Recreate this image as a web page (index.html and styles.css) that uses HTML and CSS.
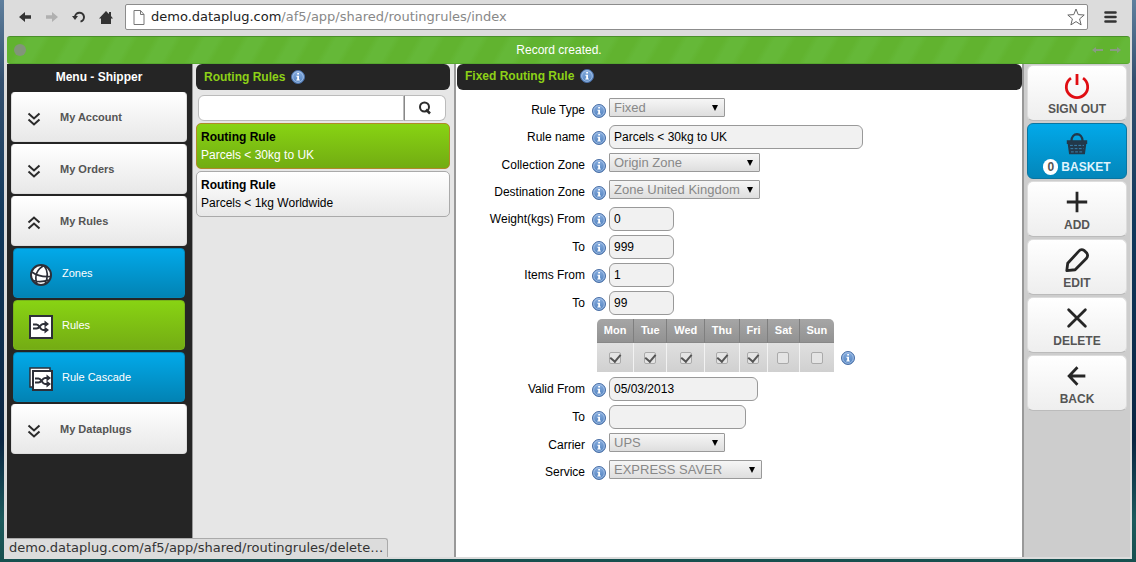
FILE: index.html
```
<!DOCTYPE html>
<html lang="en">
<head>
<meta charset="utf-8">
<title>Routing Rules</title>
<link rel="stylesheet" href="styles.css">
</head>
<body>
<svg class="sprite" aria-hidden="true">
  <defs>
    <linearGradient id="info-fill" x1="0" y1="0" x2="0" y2="1"><stop offset="0" stop-color="#88aee0"/><stop offset="1" stop-color="#4f80bd"/></linearGradient>
  </defs>
  <symbol id="info" viewBox="0 0 14 14"><circle cx="7" cy="7" r="6.5" fill="url(#info-fill)" stroke="#4a6fa5"/><circle cx="7" cy="7" r="5.3" fill="none" stroke="#a9c4e8" stroke-width=".8"/><path d="M6.2 3h1.8v1.6H6.200zM5.400 5.700h2.600v3.900h.8v1H5.300v-1h.9V6.700h-.8z" fill="#fff"/></symbol>
  <symbol id="down" viewBox="0 0 14 14"><path d="M1.500 1.500 7 6.500l5.500-5M1.500 7.500 7 12.500l5.500-5" fill="none" stroke="#2b2b2b" stroke-width="2"/></symbol>
  <symbol id="up" viewBox="0 0 14 14"><path d="M1.500 6.500 7 1.500l5.500 5M1.500 12.500 7 7.500l5.500 5" fill="none" stroke="#2b2b2b" stroke-width="2"/></symbol>
  <symbol id="arrow" viewBox="0 0 8 8"><path d="M1 1h6L4 7z" fill="#000"/></symbol>
  <symbol id="shuffle" viewBox="0 0 16 14"><path d="M0 4.500h3.500c3 0 3.500 5.500 6.500 5.500h2.500M0 8.500h3.500C7 8.500 7 4 10 4h2.500" fill="none" stroke="#2d2f38" stroke-width="2"/><path d="M11.500 .5 16 4l-4.500 3.500zM11.500 6.500 16 10l-4.500 3.500z" fill="#2d2f38"/></symbol>
</svg>
<div class="window">
  <header class="toolbar">
    <button class="tool" aria-label="Back"><svg width="14" height="12" viewBox="0 0 14 12"><path d="M1 6l6-5v3.200h6v3.600H7V11z" fill="#333"/></svg></button>
    <button class="tool" aria-label="Forward"><svg width="14" height="12" viewBox="0 0 14 12"><path d="M13 6L7 1v3.200H1v3.600h6V11z" fill="#b0b0b0"/></svg></button>
    <button class="tool" aria-label="Reload"><svg width="14" height="14" viewBox="0 0 14 14"><path d="M3 7.500A4.500 4.500 0 1 1 8.500 11.600" fill="none" stroke="#333" stroke-width="2"/><path d="M0 6h6L3 10z" fill="#333"/></svg></button>
    <button class="tool" aria-label="Home"><svg width="14" height="13" viewBox="0 0 14 13"><path d="M7 0l3 3V1h2v4l2 2.500h-2V13H2V7.500H0z" fill="#333"/></svg></button>
    <div class="address">
      <svg width="12" height="15" viewBox="0 0 12 15"><path d="M1 .5h6.500l3.500 4v10H1zM7.500.5v4H11" fill="#fff" stroke="#777"/></svg>
      <div class="url">demo.dataplug.com<span>/af5/app/shared/routingrules/index</span></div>
      <svg width="18" height="18" viewBox="0 0 18 18"><path d="M9 1l2.200 5.600 6 .4-4.600 3.900 1.500 6L9 13.600l-5.100 3.300 1.500-6L.8 7l6-.4z" fill="#fff" stroke="#666"/></svg>
    </div>
    <button class="tool menu-tool" aria-label="Browser menu"><svg width="13" height="14" viewBox="0 0 13 14"><path d="M1.500 2.500h10M1.500 7h10M1.500 11.500h10" stroke="#333" stroke-width="2.600" stroke-linecap="round"/></svg></button>
  </header>

  <div class="banner" role="status">
    <i class="dot"></i><span>Record created.</span>
    <svg width="30" height="8" viewBox="0 0 30 8"><path d="M0 4l4-3v2h7v2H4v2zM29 4l-4-3v2h-7v2h7v2z" fill="#8a9b84"/></svg>
  </div>

  <div class="app">
    <nav class="menu">
      <h2>Menu - Shipper</h2>
      <button class="item"><svg width="14" height="14"><use href="#down"/></svg>My Account</button>
      <button class="item"><svg width="14" height="14"><use href="#down"/></svg>My Orders</button>
      <button class="item"><svg width="14" height="14"><use href="#up"/></svg>My Rules</button>
      <button class="item sub"><svg width="24" height="24" viewBox="0 0 24 24"><circle cx="12" cy="12" r="10" fill="#fff" stroke="#2d2f38" stroke-width="2"/><path d="M15 2.500C8 6 5 13 8 21M15 2.500c4 5 4 12 1 18.500M3 9c5 4 11 5 18.500 4.500M4 17.500c5 1.500 10 1.500 15.500-.5" fill="none" stroke="#2d2f38" stroke-width="1.700"/></svg>Zones</button>
      <button class="item sub current"><svg width="24" height="24" viewBox="0 0 24 24"><path d="M1 1h22v22H1z" fill="#fff" stroke="#2d2f38" stroke-width="2"/><use href="#shuffle" x="4" y="5" width="16" height="14"/></svg>Rules</button>
      <button class="item sub"><svg width="24" height="24" viewBox="0 0 24 24"><path d="M1 1h20v19H1z" fill="#fff" stroke="#2d2f38" stroke-width="1.500"/><path d="M4 4h19v19H4z" fill="#fff" stroke="#2d2f38" stroke-width="2"/><use href="#shuffle" x="6" y="7" width="16" height="14"/></svg>Rule Cascade</button>
      <button class="item"><svg width="14" height="14"><use href="#down"/></svg>My Dataplugs</button>
    </nav>

    <section class="list">
      <h2 class="bar">Routing Rules <svg width="14" height="14"><use href="#info"/></svg></h2>
      <form class="search">
        <input type="text" aria-label="Search routing rules">
        <button type="button" aria-label="Search"><svg width="14" height="14" viewBox="0 0 14 14"><circle cx="6.500" cy="6" r="4.500" fill="none" stroke="#2b2b2b" stroke-width="2"/><path d="M8 8.500l4 4" stroke="#2b2b2b" stroke-width="2.500"/></svg></button>
      </form>
      <button class="rule selected"><b>Routing Rule</b>Parcels &lt; 30kg to UK</button>
      <button class="rule"><b>Routing Rule</b>Parcels &lt; 1kg Worldwide</button>
    </section>

    <main class="detail">
      <h2 class="bar">Fixed Routing Rule <svg width="14" height="14"><use href="#info"/></svg></h2>
      <form class="fields">
        <div class="row"><label for="type">Rule Type</label><svg class="info"><use href="#info"/></svg><div class="select short"><select id="type"><option>Fixed</option></select><svg><use href="#arrow"/></svg></div></div>
        <div class="row"><label for="name">Rule name</label><svg class="info"><use href="#info"/></svg><input class="wide" id="name" type="text" value="Parcels &lt; 30kg to UK"></div>
        <div class="row"><label for="from">Collection Zone</label><svg class="info"><use href="#info"/></svg><div class="select"><select id="from"><option>Origin Zone</option></select><svg><use href="#arrow"/></svg></div></div>
        <div class="row"><label for="dest">Destination Zone</label><svg class="info"><use href="#info"/></svg><div class="select"><select id="dest"><option>Zone United Kingdom</option></select><svg><use href="#arrow"/></svg></div></div>
        <div class="row"><label for="wmin">Weight(kgs) From</label><svg class="info"><use href="#info"/></svg><input class="number" id="wmin" type="text" value="0"></div>
        <div class="row"><label for="wmax">To</label><svg class="info"><use href="#info"/></svg><input class="number" id="wmax" type="text" value="999"></div>
        <div class="row"><label for="imin">Items From</label><svg class="info"><use href="#info"/></svg><input class="number" id="imin" type="text" value="1"></div>
        <div class="row"><label for="imax">To</label><svg class="info"><use href="#info"/></svg><input class="number" id="imax" type="text" value="99"></div>
        <div class="week">
          <table>
            <thead><tr><th id="mon">Mon</th><th id="tue">Tue</th><th id="wed">Wed</th><th id="thu">Thu</th><th id="fri">Fri</th><th id="sat">Sat</th><th id="sun">Sun</th></tr></thead>
            <tbody><tr>
              <td><input type="checkbox" aria-labelledby="mon" checked></td>
              <td><input type="checkbox" aria-labelledby="tue" checked></td>
              <td><input type="checkbox" aria-labelledby="wed" checked></td>
              <td><input type="checkbox" aria-labelledby="thu" checked></td>
              <td><input type="checkbox" aria-labelledby="fri" checked></td>
              <td><input type="checkbox" aria-labelledby="sat"></td>
              <td><input type="checkbox" aria-labelledby="sun"></td>
            </tr></tbody>
          </table>
          <svg class="info"><use href="#info"/></svg>
        </div>
        <div class="row"><label for="vfrom">Valid From</label><svg class="info"><use href="#info"/></svg><input class="date" id="vfrom" type="text" value="05/03/2013"></div>
        <div class="row"><label for="vto">To</label><svg class="info"><use href="#info"/></svg><input class="date-end" id="vto" type="text"></div>
        <div class="row"><label for="carrier">Carrier</label><svg class="info"><use href="#info"/></svg><div class="select short"><select id="carrier"><option>UPS</option></select><svg><use href="#arrow"/></svg></div></div>
        <div class="row"><label for="service">Service</label><svg class="info"><use href="#info"/></svg><div class="select service"><select id="service"><option>EXPRESS SAVER</option></select><svg><use href="#arrow"/></svg></div></div>
      </form>
    </main>

    <aside class="actions">
      <button class="action"><svg viewBox="0 0 28 28"><path d="M7.500 5.500a11.500 11.500 0 1 0 13 0M14 1v12" fill="none" stroke="#e00d12" stroke-width="3"/></svg><span>SIGN OUT</span></button>
      <button class="action basket"><svg viewBox="0 0 28 28"><path d="M8 11C8 1 20 1 20 11" fill="none" stroke="#22384a" stroke-width="2.500"/><path d="M3 10h22v4h-1l-1.500 11h-17L4 14H3z" fill="#22384a"/><path d="M6.500 15.500h15M7 19h14M7.500 22.500h13" stroke="#3b87b4" stroke-dasharray="3 1.500"/></svg><span><i>0</i> BASKET</span></button>
      <button class="action"><svg viewBox="0 0 28 28"><path d="M14 3v22M3 14h22" stroke="#262626" stroke-width="3"/></svg><span>ADD</span></button>
      <button class="action"><svg viewBox="0 0 28 28"><path d="M3 25.500 4 17.500 16 4.500Q18.500 1.500 22 4L24.500 6.500Q26.500 9.500 24 12.500L12 24.500z" fill="none" stroke="#262626" stroke-width="3" stroke-linejoin="round"/></svg><span>EDIT</span></button>
      <button class="action"><svg viewBox="0 0 28 28"><path d="M5 5l18 18M23 5L5 23" stroke="#262626" stroke-width="3" stroke-linecap="round"/></svg><span>DELETE</span></button>
      <button class="action"><svg viewBox="0 0 28 28"><path d="M23 14H6M14.500 4.500L5.500 14l9 9.500" fill="none" stroke="#262626" stroke-width="3"/></svg><span>BACK</span></button>
    </aside>
  </div>
  <div class="status">demo.dataplug.com/af5/app/shared/routingrules/delete…</div>
</div>
</body>
</html>
```
FILE: styles.css
```
* { box-sizing: border-box; }
body {
  margin: 0;
  background: linear-gradient(#5f7f9d 0, #34506f 80px, #12395c 220px, #0a2542 440px, #1c5a5c 520px, #17504f 100%);
  font: 12px/18px "Liberation Sans", Arial, sans-serif;
  color: #000;
}
button, input, select { font: inherit; color: inherit; margin: 0; }
button { cursor: pointer; border: 0; background: none; padding: 0; }
svg { display: block; flex: none; }
h2 { margin: 0; font-size: 12px; line-height: 26px; }
.sprite { position: absolute; width: 0; height: 0; }

.window {
  position: relative;
  display: flex;
  flex-direction: column;
  min-height: calc(100vh - 3px);
  margin: 0 4px 3px;
  padding: 0 2px 2px 3px;
  background: #dcdcdc;
}
.toolbar { display: flex; align-items: center; height: 36px; padding: 0 11px 2px 4px; }
.tool { display: grid; place-items: center; width: 27px; height: 26px; }
.menu-tool { width: 18px; margin-left: 13px; }
.address {
  flex: 1;
  display: flex;
  align-items: center;
  gap: 6px;
  height: 26px;
  margin-left: 6px;
  padding: 0 2px 0 7px;
  background: #fff;
  border: 1px solid #8c8c8c;
  border-radius: 2px;
}
.url { flex: 1; font: 13px/20px "DejaVu Sans", sans-serif; color: #222; }
.url span { color: #888; }

.banner {
  display: flex;
  align-items: center;
  justify-content: space-between;
  height: 28px;
  padding: 0 8px 0 7px;
  color: #fff;
  background: repeating-linear-gradient(120deg, #61b32f 0 14px, #65b838 20px 32px, #61b32f 38px);
  border-top: 1px solid #4a8f2a;
  border-bottom: 1px solid #57a82e;
  border-radius: 3px;
}
.dot { width: 12px; height: 12px; border-radius: 50%; background: #82957a; }

.app { flex: 1; display: flex; }
.menu { flex: none; width: 185px; padding: 0 5px 0 4px; background: #252525; color: #fff; }
.menu h2 { text-align: center; margin-bottom: 2px; }
.item {
  display: grid;
  grid-template-columns: 26px 1fr;
  align-items: center;
  gap: 7px;
  width: 100%;
  height: 50px;
  margin-bottom: 2px;
  padding-left: 15px;
  border-radius: 4px;
  background: linear-gradient(#fff, #e8e8e8);
  border: 1px solid #ddd;
  border-top-color: #fff;
  color: #555;
  font-size: 11px;
  font-weight: bold;
  text-align: left;
}
.item svg { margin-top: 4px; }
.sub {
  width: auto;
  min-width: calc(100% - 4px);
  margin-left: 2px;
  background: linear-gradient(#02a9e9, #0283b4);
  border-color: #0586b6;
  color: #fff;
  font-weight: normal;
}
.current { background: linear-gradient(#88d313, #74ac14); border-color: #78b31a; }

.list { flex: none; width: 262px; padding: 0 4px; background: #e6e6e6; border-left: 1px solid #999; }
.list .bar { margin: 0 0 5px -1px; }
.bar {
  display: flex;
  align-items: center;
  gap: 6px;
  padding-left: 8px;
  height: 26px;
  color: #8dd117;
  background: #252525;
  border-radius: 6px;
}
.search { display: flex; height: 26px; margin: 0 4px 2px 1px; }
.search input { flex: 1; min-width: 0; border: 1px solid #bbb; border-radius: 6px 0 0 6px; background: #fff; padding: 0 5px; }
.search button { display: grid; place-items: center; width: 42px; border: 1px solid #bbb; border-left-color: #888; border-radius: 0 6px 6px 0; background: #fff; }
.rule {
  display: block;
  width: calc(100% + 1px);
  height: 46px;
  margin: 0 0 2px -1px;
  padding: 0 4px;
  text-align: left;
  background: linear-gradient(#fff, #e8e8e8);
  border: 1px solid #aaa;
  border-radius: 5px;
}
.rule b { display: block; }
.selected { background: linear-gradient(#88d313, #72ac12); border-color: #b08a28; color: #fff; }
.selected b { color: #000; }

.detail { flex: 1; min-width: 0; background: #fff; border-left: 2px solid #999; padding-left: 1px; }
.detail .bar { padding-bottom: 2px; }
.fields { padding-top: 8px; }
.row { display: flex; align-items: flex-start; padding-bottom: 4px; }
.row:has(.select) { height: 27px; padding: 0; }
.row label { width: 128px; line-height: 24px; text-align: right; }
.info { width: 14px; height: 14px; margin: 6px 3px 0 7px; }
.row input { height: 24px; padding: 0 4px; background: #f1f1f1; border: 1px solid #999; border-radius: 6px; }
.wide { width: 254px; }
.number { width: 65px; }
.date { width: 149px; }
.date-end { width: 137px; }
.select { display: grid; width: 151px; }
.short { width: 116px; }
.service { width: 153px; }
.select select {
  grid-area: 1 / 1;
  appearance: none;
  height: 19px;
  padding: 0 4px;
  font-size: 13px;
  line-height: 17px;
  color: #888;
  background: linear-gradient(#f6f6f6, #dedede);
  border: 1px solid #999;
  border-radius: 1px;
}
.select svg { grid-area: 1 / 1; place-self: center end; width: 8px; height: 8px; margin-right: 6px; pointer-events: none; }

.week { display: flex; align-items: flex-end; height: 53px; margin: 0 0 5px 140px; }
.week table { width: 237px; border-spacing: 0; border-radius: 5px 5px 0 0; overflow: hidden; }
.week th { height: 24px; padding: 0 6px; font-size: 11px; line-height: 23px; color: #fff; background: linear-gradient(#a6a6a6, #929292); border-bottom: 1px solid #888; }
.week th + th { border-left: 1px solid #7f7f7f; }
.week td { height: 29px; padding: 0; text-align: center; background: linear-gradient(#e0e0e0, #d0d0d0); }
.week td + td { border-left: 1px solid #f2f2f2; }
.week .info { margin-bottom: 7px; }
.week input { appearance: none; display: grid; place-items: center; width: 12px; height: 12px; margin: 0 auto; border: 1px solid #aaa; border-radius: 2px; background: #e4e4e4; }
.week input:checked::before { content: ""; width: 5px; height: 8px; margin: -2px 0 0 1px; border: solid #555; border-width: 0 2px 2px 0; transform: rotate(40deg); }

.actions { flex: none; width: 108px; padding: 1px 3px 0 3px; background: #cdcdcd; border-left: 2px solid #999; }
.action {
  display: flex;
  flex-direction: column;
  align-items: center;
  width: 100%;
  height: 56px;
  margin-bottom: 2px;
  padding-top: 7px;
  color: #555;
  font-weight: bold;
  background: linear-gradient(#fff, #eee);
  border: 1px solid #ddd;
  border-bottom-color: #bbb;
  border-radius: 6px;
}
.action svg { width: 26px; height: 26px; }
.action span { display: flex; align-items: center; gap: 3px; line-height: 20px; }
.action i { width: 15px; height: 16px; line-height: 16px; border-radius: 8px; background: #fff; color: #555; font-style: normal; }
.basket { color: #dff3fc; background: linear-gradient(#02a9e9, #0386ba); border-color: #0a75a0; }

.status {
  position: absolute;
  left: 3px;
  bottom: 2px;
  padding: 0 4px 0 2px;
  font: 13px/18px "DejaVu Sans", sans-serif;
  color: #333;
  background: #dcdcdc;
  border: 1px solid #aaa;
  border-width: 1px 1px 0 0;
  border-radius: 0 3px 0 0;
}
```
